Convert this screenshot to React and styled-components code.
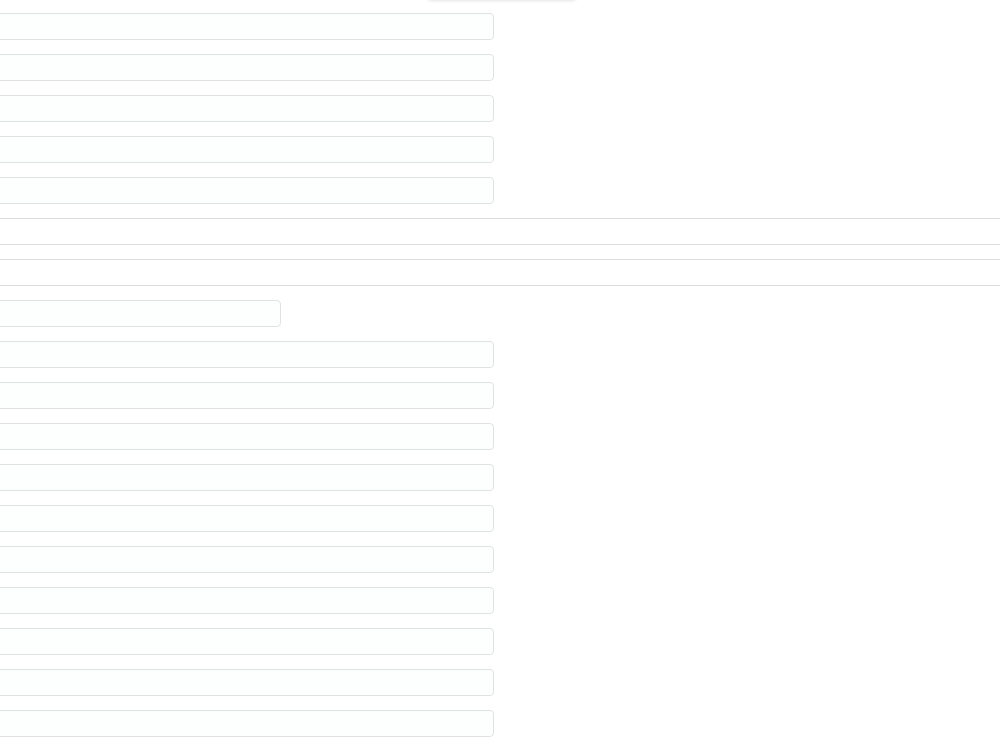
import React from "react";
import styled, { createGlobalStyle } from "styled-components";

const GlobalStyle = createGlobalStyle`
  html, body {
    margin: 0;
    padding: 0;
    background: #ffffff;
    font-family: "Liberation Sans", Arial, sans-serif;
    overflow: hidden;
  }
`;

const Page = styled.div`
  position: relative;
  width: 1000px;
  height: 750px;
  overflow: hidden;
`;

const Popover = styled.div`
  position: absolute;
  top: -40px;
  left: 426px;
  width: 152px;
  height: 40px;
  background: #ffffff;
  border-radius: 6px;
  box-shadow: 0 1px 3px rgba(20, 30, 40, 0.12);
`;

const List = styled.div`
  display: flex;
  flex-direction: column;
  gap: 14px;
  padding-top: 13px;
  margin-left: -12px;
`;

const Field = styled.div`
  box-sizing: border-box;
  width: ${(p) => p.$width}px;
  height: 27px;
  background: #fdfefe;
  border: 1px solid #dfe2e4;
  border-radius: 4px;
`;

const Band = styled.div`
  box-sizing: border-box;
  width: 1012px;
  height: 27px;
  background: #ffffff;
  border-top: 1px solid #dcdfe1;
  border-bottom: 1px solid #dcdfe1;
`;

const rows = [
  "field", "field", "field", "field", "field",
  "band", "band",
  "short",
  "field", "field", "field", "field", "field",
  "field", "field", "field", "field", "field",
];

export default function App() {
  return (
    <Page>
      <GlobalStyle />
      <Popover />
      <List>
        {rows.map((kind, i) =>
          kind === "band" ? (
            <Band key={i} />
          ) : (
            <Field key={i} $width={kind === "short" ? 293 : 506} />
          )
        )}
      </List>
    </Page>
  );
}
